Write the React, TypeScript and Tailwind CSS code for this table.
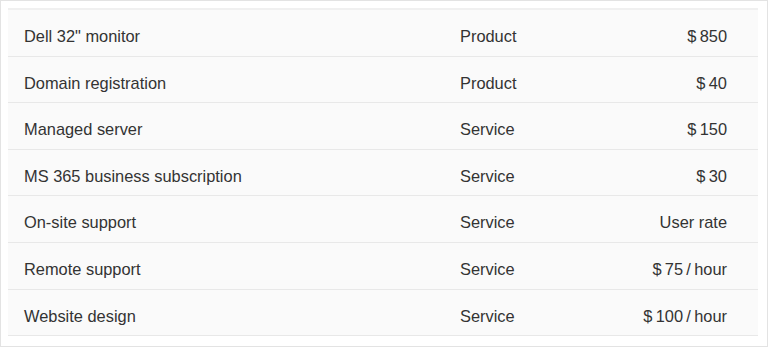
const rows: { name: string; type: string; price: React.ReactNode }[] = [
  { name: 'Dell 32" monitor', type: "Product", price: <>$&thinsp;850</> },
  { name: "Domain registration", type: "Product", price: <>$&thinsp;40</> },
  { name: "Managed server", type: "Service", price: <>$&thinsp;150</> },
  { name: "MS 365 business subscription", type: "Service", price: <>$&thinsp;30</> },
  { name: "On-site support", type: "Service", price: "User rate" },
  { name: "Remote support", type: "Service", price: <>$&thinsp;75&thinsp;/&thinsp;hour</> },
  { name: "Website design", type: "Service", price: <>$&thinsp;100&thinsp;/&thinsp;hour</> },
];

export default function App() {
  return (
    <div className="h-[347px] w-[768px] border border-[#e3e3e3] bg-white pl-[7px] pr-[9px] pt-[7px] font-['Liberation_Sans',Arial,sans-serif] text-[16.4px] text-[#333]">
      <div className="border-t-2 border-[#f0f0f0] bg-[#fafafa]">
        {rows.map((r) => (
          <div
            key={r.name}
            className="flex h-[46.6px] items-center border-b border-[#e8e8e8] pl-4 pr-[31px] pt-[7px]"
          >
            <div className="w-[436px]">{r.name}</div>
            <div className="flex-1">{r.type}</div>
            <div className="text-right">{r.price}</div>
          </div>
        ))}
      </div>
    </div>
  );
}
